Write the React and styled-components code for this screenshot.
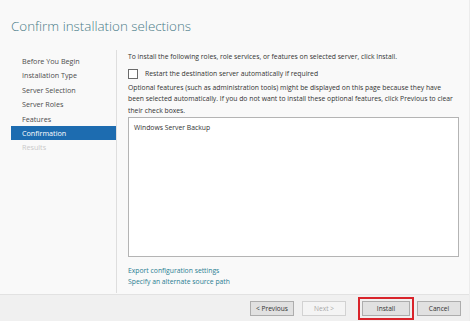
import React from "react";
import styled, { createGlobalStyle } from "styled-components";

const GlobalStyle = createGlobalStyle`
  html, body {
    margin: 0;
    padding: 0;
    background: #ffffff;
  }
  body {
    font-family: "Open Sans", "Noto Sans", sans-serif;
  }
`;

const steps = [
  { label: "Before You Begin" },
  { label: "Installation Type" },
  { label: "Server Selection" },
  { label: "Server Roles" },
  { label: "Features" },
  { label: "Confirmation", active: true },
  { label: "Results", disabled: true },
];

const App = () => {
  return (
    <>
      <GlobalStyle />
      <Wizard>
        <Header>
          <Title>Confirm installation selections</Title>
        </Header>

        <Body>
          <Sidebar>
            {steps.map((s) => (
              <NavItem key={s.label} $active={s.active} $disabled={s.disabled}>
                {s.label}
              </NavItem>
            ))}
          </Sidebar>

          <Main>
            <Text>
              To install the following roles, role services, or features on
              selected server, click Install.
            </Text>
            <CheckRow>
              <CheckBox />
              <span>Restart the destination server automatically if required</span>
            </CheckRow>
            <Text $nowrap>
              Optional features (such as administration tools) might be
              displayed on this page because they have
              <br />
              been selected automatically. If you do not want to install these
              optional features, click Previous to clear
              <br />
              their check boxes.
            </Text>

            <ResultBox>Windows Server Backup</ResultBox>

            <Links>
              <LinkText>Export configuration settings</LinkText>
              <LinkText>Specify an alternate source path</LinkText>
            </Links>
          </Main>
        </Body>

        <Footer>
          <Button>&lt; Previous</Button>
          <Button disabled>Next &gt;</Button>
          <Highlight>
            <Button>Install</Button>
          </Highlight>
          <Button>Cancel</Button>
        </Footer>
      </Wizard>
    </>
  );
};

// Styled Components
const Wizard = styled.div`
  width: 469px;
  height: 321px;
  background: #f9f9f9;
  border-right: 1px solid #ececec;
  display: flex;
  flex-direction: column;
  overflow: hidden;
`;

const Header = styled.div`
  height: 50px;
  box-sizing: border-box;
  padding: 17px 0 0 11px;
`;

const Title = styled.h1`
  margin: 0;
  font-size: 13.4px;
  font-weight: 300;
  line-height: 18px;
  color: #4a7c88;
`;

const Body = styled.div`
  display: flex;
  height: 244px;
`;

const Sidebar = styled.div`
  width: 105px;
  margin-left: 11px;
  padding-top: 4px;
  border-right: 1px solid #dedede;
  margin-bottom: 1px;
`;

const NavItem = styled.div`
  height: 14.4px;
  line-height: 14.4px;
  padding-left: 11px;
  font-size: 7.2px;
  color: ${(p) => (p.$active ? "#ffffff" : p.$disabled ? "#c9c9c9" : "#4d4d4d")};
  background: ${(p) => (p.$active ? "#1d6cb0" : "transparent")};
`;

const Main = styled.div`
  flex: 1;
  min-width: 0;
  padding: 1px 10px 0 11px;
  font-size: 6.8px;
  color: #333333;
  display: flex;
  flex-direction: column;
`;

const Text = styled.p`
  margin: 0;
  line-height: 11.5px;
  white-space: ${(p) => (p.$nowrap ? "nowrap" : "normal")};
`;

const CheckRow = styled.div`
  display: flex;
  align-items: center;
  gap: 7px;
  height: 12px;
  margin: 5px 0 2px;
`;

const CheckBox = styled.span`
  display: inline-block;
  width: 8px;
  height: 8px;
  border: 1px solid #6b6b6b;
  background: #ffffff;
`;

const ResultBox = styled.div`
  margin-top: 1px;
  height: 140px;
  box-sizing: border-box;
  background: #ffffff;
  border: 1px solid #b4b4b4;
  padding: 4px 5px;
  line-height: 11px;
`;

const Links = styled.div`
  margin-top: 8px;
  display: flex;
  flex-direction: column;
`;

const LinkText = styled.span`
  color: #2a7e92;
  line-height: 11px;
`;

const Footer = styled.div`
  flex: 1;
  background: #f0f0f0;
  border-top: 1px solid #e2e2e2;
  display: flex;
  align-items: center;
  justify-content: flex-end;
  padding-right: 8px;
  gap: 8px;
`;

const Button = styled.button`
  width: 44px;
  height: 15px;
  padding: 0;
  box-sizing: border-box;
  font-family: inherit;
  font-size: 6.6px;
  color: ${(p) => (p.disabled ? "#a8a8a8" : "#333333")};
  background: ${(p) => (p.disabled ? "#f4f4f4" : "#e1e1e1")};
  border: 1px solid ${(p) => (p.disabled ? "#d2d2d2" : "#adadad")};
`;

const Highlight = styled.div`
  display: flex;
  padding: 2px 2px;
  border: 2px solid #d9242b;
  margin-left: 4px;
  margin-right: -5px;

  ${Button} {
    width: 48px;
  }
`;

export default App;
